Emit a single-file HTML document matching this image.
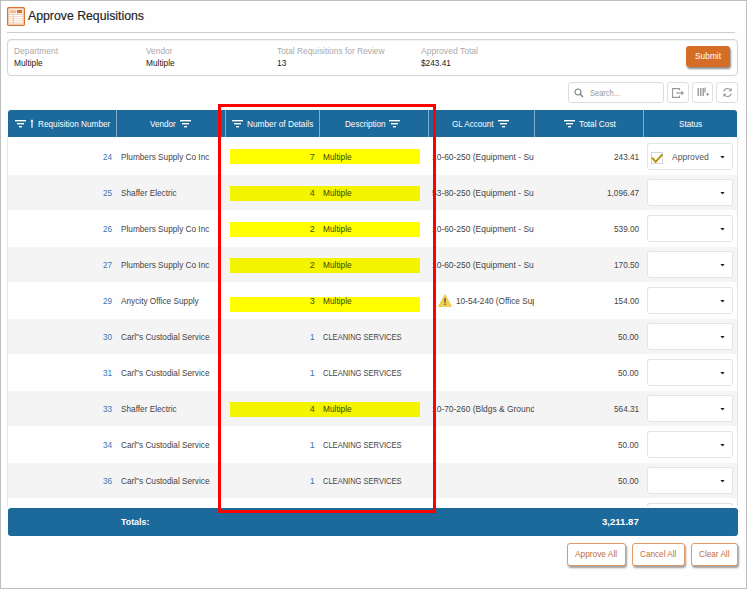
<!DOCTYPE html>
<html><head><meta charset="utf-8"><style>
html,body{margin:0;padding:0;}
body{width:747px;height:589px;position:relative;overflow:hidden;background:#fefefe;font-family:"Liberation Sans",sans-serif;}
.frame{position:absolute;left:0;top:0;width:747px;height:589px;box-sizing:border-box;border:1px solid #bdbdbd;}
.t{position:absolute;white-space:nowrap;transform-origin:0 0;}
</style></head><body>
<div class="frame"></div>
<svg style="position:absolute;left:7px;top:7px" width="18" height="19" viewBox="0 0 18 19">
<rect x="0.6" y="0.6" width="16.8" height="17.8" rx="1.5" fill="#fdf3ea" stroke="#d8732f" stroke-width="1.3"/>
<rect x="2" y="2" width="14" height="15" fill="#fff" stroke="#eab58e" stroke-width="0.6"/>
<rect x="2.8" y="3.2" width="6.5" height="2.8" fill="#f0b98f"/>
<rect x="10" y="3" width="5" height="3" fill="#d8732f"/>
<line x1="2.5" y1="7.3" x2="15.5" y2="7.3" stroke="#eab58e" stroke-width="0.8"/>
<line x1="2.5" y1="9.5" x2="15.5" y2="9.5" stroke="#f3d3bb" stroke-width="0.8"/>
<line x1="2.5" y1="11.6" x2="15.5" y2="11.6" stroke="#f3d3bb" stroke-width="0.8"/>
<line x1="2.5" y1="13.7" x2="15.5" y2="13.7" stroke="#f3d3bb" stroke-width="0.8"/>
<line x1="2.5" y1="15.8" x2="15.5" y2="15.8" stroke="#f3d3bb" stroke-width="0.8"/>
<line x1="6.2" y1="7.5" x2="6.2" y2="16.5" stroke="#eab58e" stroke-width="0.8"/>
</svg>
<div class="t" style="left:28.00px;top:7.90px;font-size:13px;line-height:15.60px;color:#262626;transform:scaleX(0.9442);-webkit-text-stroke:0.2px #262626;">Approve Requisitions</div>
<div style="position:absolute;left:7px;top:32px;width:728px;height:1px;background:#cdcdcd;"></div>
<div style="position:absolute;left:7px;top:39px;width:731px;height:37px;box-sizing:border-box;border:1px solid #d4d4d4;border-radius:4px;background:#fff;box-shadow:inset 0 1px 1px rgba(0,0,0,0.06);"></div>
<div class="t" style="left:13.60px;top:45.98px;font-size:9px;line-height:10.80px;color:#aaaaaa;transform:scaleX(0.9378);">Department</div>
<div class="t" style="left:13.60px;top:57.78px;font-size:9px;line-height:10.80px;color:#222;transform:scaleX(0.9257);">Multiple</div>
<div class="t" style="left:145.50px;top:45.98px;font-size:9px;line-height:10.80px;color:#aaaaaa;transform:scaleX(0.9300);">Vendor</div>
<div class="t" style="left:145.50px;top:57.78px;font-size:9px;line-height:10.80px;color:#222;transform:scaleX(0.9257);">Multiple</div>
<div class="t" style="left:277.40px;top:45.98px;font-size:9px;line-height:10.80px;color:#aaaaaa;transform:scaleX(0.9303);">Total Requisitions for Review</div>
<div class="t" style="left:277.40px;top:57.78px;font-size:9px;line-height:10.80px;color:#222;transform:scaleX(0.9300);">13</div>
<div class="t" style="left:420.80px;top:45.98px;font-size:9px;line-height:10.80px;color:#aaaaaa;transform:scaleX(0.9517);">Approved Total</div>
<div class="t" style="left:420.80px;top:57.78px;font-size:9px;line-height:10.80px;color:#222;transform:scaleX(0.9159);">$243.41</div>
<div style="position:absolute;left:686px;top:46px;width:44px;height:21px;background:#d66d27;border-radius:3px;box-shadow:1px 2px 2px rgba(0,0,0,0.45);"></div>
<div class="t" style="left:694.60px;top:51.28px;font-size:9px;line-height:10.80px;color:#fff;transform:scaleX(0.9289);">Submit</div>
<div style="position:absolute;left:568px;top:82px;width:96px;height:21px;box-sizing:border-box;border:1px solid #dcdcdc;border-radius:3px;background:#fff;"></div>
<svg style="position:absolute;left:574px;top:88px" width="10" height="10" viewBox="0 0 10 10">
<circle cx="4" cy="4" r="3" fill="none" stroke="#808080" stroke-width="1.2"/>
<line x1="6.2" y1="6.2" x2="9" y2="9" stroke="#808080" stroke-width="1.4"/></svg>
<div class="t" style="left:589.50px;top:87.68px;font-size:9px;line-height:10.80px;color:#999;transform:scaleX(0.8333);">Search...</div>
<div style="position:absolute;left:667px;top:82px;width:22px;height:21px;box-sizing:border-box;border:1px solid #e0e0e0;border-radius:3px;background:#fff;"></div>
<div style="position:absolute;left:692px;top:82px;width:21px;height:21px;box-sizing:border-box;border:1px solid #e0e0e0;border-radius:3px;background:#fff;"></div>
<div style="position:absolute;left:716px;top:82px;width:22px;height:21px;box-sizing:border-box;border:1px solid #e0e0e0;border-radius:3px;background:#fff;"></div>
<svg style="position:absolute;left:672px;top:88px" width="13" height="10" viewBox="0 0 13 10">
<path d="M7.5 2.5 V0.6 H0.6 V9.4 H7.5 V7.5" fill="none" stroke="#9a9a9a" stroke-width="1.1"/>
<line x1="4" y1="5" x2="10" y2="5" stroke="#9a9a9a" stroke-width="1.2"/>
<path d="M9.3 2.6 L12 5 L9.3 7.4 Z" fill="#9a9a9a"/></svg>
<svg style="position:absolute;left:697px;top:87px" width="12" height="12" viewBox="0 0 12 12">
<rect x="0.5" y="1" width="1.4" height="8" fill="#9a9a9a"/><rect x="3" y="1" width="1.4" height="8" fill="#9a9a9a"/><rect x="5.5" y="1" width="1.4" height="8" fill="#9a9a9a"/>
<rect x="7.4" y="0.5" width="1.2" height="5" fill="#9a9a9a"/>
<path d="M9 7.3 H12 M10.5 5.8 V8.8" stroke="#9a9a9a" stroke-width="1"/></svg>
<svg style="position:absolute;left:722px;top:87px" width="11" height="11" viewBox="0 0 11 11">
<path d="M1.6 4.6 A4 4 0 0 1 8.6 3" fill="none" stroke="#9a9a9a" stroke-width="1.1"/>
<path d="M9.6 0.8 V4.2 H6.3 Z" fill="#9a9a9a"/>
<path d="M9.4 6.4 A4 4 0 0 1 2.4 8" fill="none" stroke="#9a9a9a" stroke-width="1.1"/>
<path d="M1.4 10.2 V6.8 H4.7 Z" fill="#9a9a9a"/></svg>
<div style="position:absolute;left:8px;top:110px;width:729px;height:27px;background:#1c6a9c;border-radius:3px 3px 0 0;"></div>
<div style="position:absolute;left:116px;top:110px;width:1px;height:27px;background:rgba(255,255,255,0.45);"></div>
<div style="position:absolute;left:225px;top:110px;width:1px;height:27px;background:rgba(255,255,255,0.45);"></div>
<div style="position:absolute;left:319px;top:110px;width:1px;height:27px;background:rgba(255,255,255,0.45);"></div>
<div style="position:absolute;left:428px;top:110px;width:1px;height:27px;background:rgba(255,255,255,0.45);"></div>
<div style="position:absolute;left:534px;top:110px;width:1px;height:27px;background:rgba(255,255,255,0.45);"></div>
<div style="position:absolute;left:643px;top:110px;width:1px;height:27px;background:rgba(255,255,255,0.45);"></div>
<div style="position:absolute;left:7px;top:137px;width:1px;height:369px;background:#e6e6e6;"></div>
<div style="position:absolute;left:737px;top:137px;width:1px;height:369px;background:#e6e6e6;"></div>
<svg style="position:absolute;left:15px;top:120px" width="12" height="8" viewBox="0 0 12 8">
<rect x="0" y="0" width="11" height="1.4" fill="#fff"/><rect x="2" y="3" width="7" height="1.4" fill="#fff"/><rect x="4" y="6" width="3" height="1.4" fill="#fff"/></svg>
<svg style="position:absolute;left:30px;top:119px" width="4" height="9" viewBox="0 0 4 9"><path d="M2 0.3 L3.6 2.6 H0.4 Z" fill="#fff"/><rect x="1.4" y="2" width="1.2" height="6.8" fill="#fff"/></svg>
<div class="t" style="left:38.30px;top:118.68px;font-size:9px;line-height:10.80px;color:#fff;transform:scaleX(0.9150);">Requisition Number</div>
<div class="t" style="left:149.60px;top:118.68px;font-size:9px;line-height:10.80px;color:#fff;transform:scaleX(0.9008);">Vendor</div>
<svg style="position:absolute;left:180px;top:120px" width="12" height="8" viewBox="0 0 12 8">
<rect x="0" y="0" width="11" height="1.4" fill="#fff"/><rect x="2" y="3" width="7" height="1.4" fill="#fff"/><rect x="4" y="6" width="3" height="1.4" fill="#fff"/></svg>
<svg style="position:absolute;left:232px;top:120px" width="12" height="8" viewBox="0 0 12 8">
<rect x="0" y="0" width="11" height="1.4" fill="#fff"/><rect x="2" y="3" width="7" height="1.4" fill="#fff"/><rect x="4" y="6" width="3" height="1.4" fill="#fff"/></svg>
<div class="t" style="left:247.40px;top:118.68px;font-size:9px;line-height:10.80px;color:#fff;transform:scaleX(0.9203);">Number of Details</div>
<div class="t" style="left:344.60px;top:118.68px;font-size:9px;line-height:10.80px;color:#fff;transform:scaleX(0.9022);">Description</div>
<svg style="position:absolute;left:389px;top:120px" width="12" height="8" viewBox="0 0 12 8">
<rect x="0" y="0" width="11" height="1.4" fill="#fff"/><rect x="2" y="3" width="7" height="1.4" fill="#fff"/><rect x="4" y="6" width="3" height="1.4" fill="#fff"/></svg>
<div class="t" style="left:452.00px;top:118.68px;font-size:9px;line-height:10.80px;color:#fff;transform:scaleX(0.8980);">GL Account</div>
<svg style="position:absolute;left:498px;top:120px" width="12" height="8" viewBox="0 0 12 8">
<rect x="0" y="0" width="11" height="1.4" fill="#fff"/><rect x="2" y="3" width="7" height="1.4" fill="#fff"/><rect x="4" y="6" width="3" height="1.4" fill="#fff"/></svg>
<svg style="position:absolute;left:564px;top:120px" width="12" height="8" viewBox="0 0 12 8">
<rect x="0" y="0" width="11" height="1.4" fill="#fff"/><rect x="2" y="3" width="7" height="1.4" fill="#fff"/><rect x="4" y="6" width="3" height="1.4" fill="#fff"/></svg>
<div class="t" style="left:579.00px;top:118.68px;font-size:9px;line-height:10.80px;color:#fff;transform:scaleX(0.9224);">Total Cost</div>
<div class="t" style="left:678.80px;top:118.68px;font-size:9px;line-height:10.80px;color:#fff;transform:scaleX(0.9093);">Status</div>
<div style="position:absolute;left:8px;top:137px;width:729px;height:369px;overflow:hidden;">
<div style="position:absolute;left:0;top:38px;width:729px;height:35px;background:#f4f4f4;"></div>
<div style="position:absolute;left:0;top:110px;width:729px;height:35px;background:#f4f4f4;"></div>
<div style="position:absolute;left:0;top:182px;width:729px;height:35px;background:#f4f4f4;"></div>
<div style="position:absolute;left:0;top:254px;width:729px;height:35px;background:#f4f4f4;"></div>
<div style="position:absolute;left:0;top:326px;width:729px;height:35px;background:#f4f4f4;"></div>
</div>
<div class="t" style="left:102.86px;top:151.68px;font-size:9px;line-height:10.80px;color:#3a78b8;transform:scaleX(0.9150);">24</div>
<div class="t" style="left:120.50px;top:151.68px;font-size:9px;line-height:10.80px;color:#444;transform:scaleX(0.9150);">Plumbers Supply Co Inc</div>
<div style="position:absolute;left:230px;top:149px;width:190px;height:15px;background:#ffff00;"></div>
<div class="t" style="left:309.83px;top:151.68px;font-size:9px;line-height:10.80px;color:#3a5a00;">7</div>
<div class="t" style="left:322.80px;top:151.68px;font-size:9px;line-height:10.80px;color:#444400;transform:scaleX(0.9224);">Multiple</div>
<div style="position:absolute;left:428px;top:147px;width:106px;height:20px;overflow:hidden;">
<div class="t" style="left:4.00px;top:4.68px;font-size:9px;line-height:10.80px;color:#444;transform:scaleX(0.9368);">10-60-250 (Equipment - Supplies)</div>
</div>
<div class="t" style="left:613.60px;top:151.68px;font-size:9px;line-height:10.80px;color:#444;transform:scaleX(0.9150);">243.41</div>
<div style="position:absolute;left:647px;top:143px;width:86px;height:27px;box-sizing:border-box;border:1px solid #e4e4e4;border-radius:3px;background:#fff;"></div>
<svg style="position:absolute;left:720px;top:156px" width="5" height="3" viewBox="0 0 5 3"><path d="M0.3 0 H4.7 L2.5 2.6 Z" fill="#222"/></svg>
<svg style="position:absolute;left:651px;top:152px" width="12" height="12" viewBox="0 0 12 12">
<rect x="0.5" y="0.5" width="11" height="11" fill="#fff" stroke="#d6d6d6" stroke-width="1"/>
<path d="M1 5.6 L4.7 9.8 L11.3 2.3" fill="none" stroke="#b39206" stroke-width="2"/></svg>
<div class="t" style="left:672.00px;top:151.68px;font-size:9px;line-height:10.80px;color:#555;transform:scaleX(0.9528);">Approved</div>
<div class="t" style="left:102.86px;top:187.68px;font-size:9px;line-height:10.80px;color:#3a78b8;transform:scaleX(0.9150);">25</div>
<div class="t" style="left:120.50px;top:187.68px;font-size:9px;line-height:10.80px;color:#444;transform:scaleX(0.9150);">Shaffer Electric</div>
<div style="position:absolute;left:230px;top:186px;width:190px;height:15px;background:#f4f400;"></div>
<div class="t" style="left:309.83px;top:187.68px;font-size:9px;line-height:10.80px;color:#3a5a00;">4</div>
<div class="t" style="left:322.80px;top:187.68px;font-size:9px;line-height:10.80px;color:#444400;transform:scaleX(0.9224);">Multiple</div>
<div style="position:absolute;left:428px;top:183px;width:106px;height:20px;overflow:hidden;">
<div class="t" style="left:4.00px;top:4.68px;font-size:9px;line-height:10.80px;color:#444;transform:scaleX(0.9368);">53-80-250 (Equipment - Supplies)</div>
</div>
<div class="t" style="left:606.72px;top:187.68px;font-size:9px;line-height:10.80px;color:#444;transform:scaleX(0.9150);">1,096.47</div>
<div style="position:absolute;left:647px;top:179px;width:86px;height:27px;box-sizing:border-box;border:1px solid #e4e4e4;border-radius:3px;background:#fff;"></div>
<svg style="position:absolute;left:720px;top:192px" width="5" height="3" viewBox="0 0 5 3"><path d="M0.3 0 H4.7 L2.5 2.6 Z" fill="#222"/></svg>
<div class="t" style="left:102.86px;top:223.68px;font-size:9px;line-height:10.80px;color:#3a78b8;transform:scaleX(0.9150);">26</div>
<div class="t" style="left:120.50px;top:223.68px;font-size:9px;line-height:10.80px;color:#444;transform:scaleX(0.9150);">Plumbers Supply Co Inc</div>
<div style="position:absolute;left:230px;top:222px;width:190px;height:15px;background:#ffff00;"></div>
<div class="t" style="left:309.83px;top:223.68px;font-size:9px;line-height:10.80px;color:#3a5a00;">2</div>
<div class="t" style="left:322.80px;top:223.68px;font-size:9px;line-height:10.80px;color:#444400;transform:scaleX(0.9224);">Multiple</div>
<div style="position:absolute;left:428px;top:219px;width:106px;height:20px;overflow:hidden;">
<div class="t" style="left:4.00px;top:4.68px;font-size:9px;line-height:10.80px;color:#444;transform:scaleX(0.9368);">10-60-250 (Equipment - Supplies)</div>
</div>
<div class="t" style="left:613.60px;top:223.68px;font-size:9px;line-height:10.80px;color:#444;transform:scaleX(0.9150);">539.00</div>
<div style="position:absolute;left:647px;top:215px;width:86px;height:27px;box-sizing:border-box;border:1px solid #e4e4e4;border-radius:3px;background:#fff;"></div>
<svg style="position:absolute;left:720px;top:228px" width="5" height="3" viewBox="0 0 5 3"><path d="M0.3 0 H4.7 L2.5 2.6 Z" fill="#222"/></svg>
<div class="t" style="left:102.86px;top:259.68px;font-size:9px;line-height:10.80px;color:#3a78b8;transform:scaleX(0.9150);">27</div>
<div class="t" style="left:120.50px;top:259.68px;font-size:9px;line-height:10.80px;color:#444;transform:scaleX(0.9150);">Plumbers Supply Co Inc</div>
<div style="position:absolute;left:230px;top:258px;width:190px;height:15px;background:#f4f400;"></div>
<div class="t" style="left:309.83px;top:259.68px;font-size:9px;line-height:10.80px;color:#3a5a00;">2</div>
<div class="t" style="left:322.80px;top:259.68px;font-size:9px;line-height:10.80px;color:#444400;transform:scaleX(0.9224);">Multiple</div>
<div style="position:absolute;left:428px;top:255px;width:106px;height:20px;overflow:hidden;">
<div class="t" style="left:4.00px;top:4.68px;font-size:9px;line-height:10.80px;color:#444;transform:scaleX(0.9368);">10-60-250 (Equipment - Supplies)</div>
</div>
<div class="t" style="left:613.60px;top:259.68px;font-size:9px;line-height:10.80px;color:#444;transform:scaleX(0.9150);">170.50</div>
<div style="position:absolute;left:647px;top:251px;width:86px;height:27px;box-sizing:border-box;border:1px solid #e4e4e4;border-radius:3px;background:#fff;"></div>
<svg style="position:absolute;left:720px;top:264px" width="5" height="3" viewBox="0 0 5 3"><path d="M0.3 0 H4.7 L2.5 2.6 Z" fill="#222"/></svg>
<div class="t" style="left:102.86px;top:295.68px;font-size:9px;line-height:10.80px;color:#3a78b8;transform:scaleX(0.9150);">29</div>
<div class="t" style="left:120.50px;top:295.68px;font-size:9px;line-height:10.80px;color:#444;transform:scaleX(0.9150);">Anycity Office Supply</div>
<div style="position:absolute;left:230px;top:297px;width:190px;height:15px;background:#ffff00;"></div>
<div class="t" style="left:309.83px;top:295.68px;font-size:9px;line-height:10.80px;color:#3a5a00;">3</div>
<div class="t" style="left:322.80px;top:295.68px;font-size:9px;line-height:10.80px;color:#444400;transform:scaleX(0.9224);">Multiple</div>
<svg style="position:absolute;left:438px;top:294px" width="14" height="13" viewBox="0 0 14 13">
<path d="M7 0.5 L13.6 12.5 H0.4 Z" fill="#f3cf4c" stroke="#e8bd3a" stroke-width="0.6" stroke-linejoin="round"/>
<rect x="6.3" y="4" width="1.4" height="4.6" fill="#555"/><rect x="6.3" y="9.6" width="1.4" height="1.4" fill="#555"/></svg>
<div style="position:absolute;left:436px;top:291px;width:98px;height:20px;overflow:hidden;">
<div class="t" style="left:19.50px;top:4.68px;font-size:9px;line-height:10.80px;color:#444;transform:scaleX(0.9150);">10-54-240 (Office Supplies)</div>
</div>
<div class="t" style="left:613.60px;top:295.68px;font-size:9px;line-height:10.80px;color:#444;transform:scaleX(0.9150);">154.00</div>
<div style="position:absolute;left:647px;top:287px;width:86px;height:27px;box-sizing:border-box;border:1px solid #e4e4e4;border-radius:3px;background:#fff;"></div>
<svg style="position:absolute;left:720px;top:300px" width="5" height="3" viewBox="0 0 5 3"><path d="M0.3 0 H4.7 L2.5 2.6 Z" fill="#222"/></svg>
<div class="t" style="left:102.86px;top:331.68px;font-size:9px;line-height:10.80px;color:#3a78b8;transform:scaleX(0.9150);">30</div>
<div class="t" style="left:120.50px;top:331.68px;font-size:9px;line-height:10.80px;color:#444;transform:scaleX(0.9150);">Carl"s Custodial Service</div>
<div class="t" style="left:309.83px;top:331.68px;font-size:9px;line-height:10.80px;color:#3a78b8;">1</div>
<div class="t" style="left:322.50px;top:331.68px;font-size:9px;line-height:10.80px;color:#444;transform:scaleX(0.8363);">CLEANING SERVICES</div>
<div class="t" style="left:618.17px;top:331.68px;font-size:9px;line-height:10.80px;color:#444;transform:scaleX(0.9150);">50.00</div>
<div style="position:absolute;left:647px;top:323px;width:86px;height:27px;box-sizing:border-box;border:1px solid #e4e4e4;border-radius:3px;background:#fff;"></div>
<svg style="position:absolute;left:720px;top:336px" width="5" height="3" viewBox="0 0 5 3"><path d="M0.3 0 H4.7 L2.5 2.6 Z" fill="#222"/></svg>
<div class="t" style="left:102.86px;top:367.68px;font-size:9px;line-height:10.80px;color:#3a78b8;transform:scaleX(0.9150);">31</div>
<div class="t" style="left:120.50px;top:367.68px;font-size:9px;line-height:10.80px;color:#444;transform:scaleX(0.9150);">Carl"s Custodial Service</div>
<div class="t" style="left:309.83px;top:367.68px;font-size:9px;line-height:10.80px;color:#3a78b8;">1</div>
<div class="t" style="left:322.50px;top:367.68px;font-size:9px;line-height:10.80px;color:#444;transform:scaleX(0.8363);">CLEANING SERVICES</div>
<div class="t" style="left:618.17px;top:367.68px;font-size:9px;line-height:10.80px;color:#444;transform:scaleX(0.9150);">50.00</div>
<div style="position:absolute;left:647px;top:359px;width:86px;height:27px;box-sizing:border-box;border:1px solid #e4e4e4;border-radius:3px;background:#fff;"></div>
<svg style="position:absolute;left:720px;top:372px" width="5" height="3" viewBox="0 0 5 3"><path d="M0.3 0 H4.7 L2.5 2.6 Z" fill="#222"/></svg>
<div class="t" style="left:102.86px;top:403.68px;font-size:9px;line-height:10.80px;color:#3a78b8;transform:scaleX(0.9150);">33</div>
<div class="t" style="left:120.50px;top:403.68px;font-size:9px;line-height:10.80px;color:#444;transform:scaleX(0.9150);">Shaffer Electric</div>
<div style="position:absolute;left:230px;top:402px;width:190px;height:15px;background:#f4f400;"></div>
<div class="t" style="left:309.83px;top:403.68px;font-size:9px;line-height:10.80px;color:#3a5a00;">4</div>
<div class="t" style="left:322.80px;top:403.68px;font-size:9px;line-height:10.80px;color:#444400;transform:scaleX(0.9224);">Multiple</div>
<div style="position:absolute;left:428px;top:399px;width:106px;height:20px;overflow:hidden;">
<div class="t" style="left:4.00px;top:4.68px;font-size:9px;line-height:10.80px;color:#444;transform:scaleX(0.9368);">10-70-260 (Bldgs &amp; Grounds)</div>
</div>
<div class="t" style="left:613.60px;top:403.68px;font-size:9px;line-height:10.80px;color:#444;transform:scaleX(0.9150);">564.31</div>
<div style="position:absolute;left:647px;top:395px;width:86px;height:27px;box-sizing:border-box;border:1px solid #e4e4e4;border-radius:3px;background:#fff;"></div>
<svg style="position:absolute;left:720px;top:408px" width="5" height="3" viewBox="0 0 5 3"><path d="M0.3 0 H4.7 L2.5 2.6 Z" fill="#222"/></svg>
<div class="t" style="left:102.86px;top:439.68px;font-size:9px;line-height:10.80px;color:#3a78b8;transform:scaleX(0.9150);">34</div>
<div class="t" style="left:120.50px;top:439.68px;font-size:9px;line-height:10.80px;color:#444;transform:scaleX(0.9150);">Carl"s Custodial Service</div>
<div class="t" style="left:309.83px;top:439.68px;font-size:9px;line-height:10.80px;color:#3a78b8;">1</div>
<div class="t" style="left:322.50px;top:439.68px;font-size:9px;line-height:10.80px;color:#444;transform:scaleX(0.8363);">CLEANING SERVICES</div>
<div class="t" style="left:618.17px;top:439.68px;font-size:9px;line-height:10.80px;color:#444;transform:scaleX(0.9150);">50.00</div>
<div style="position:absolute;left:647px;top:431px;width:86px;height:27px;box-sizing:border-box;border:1px solid #e4e4e4;border-radius:3px;background:#fff;"></div>
<svg style="position:absolute;left:720px;top:444px" width="5" height="3" viewBox="0 0 5 3"><path d="M0.3 0 H4.7 L2.5 2.6 Z" fill="#222"/></svg>
<div class="t" style="left:102.86px;top:475.68px;font-size:9px;line-height:10.80px;color:#3a78b8;transform:scaleX(0.9150);">36</div>
<div class="t" style="left:120.50px;top:475.68px;font-size:9px;line-height:10.80px;color:#444;transform:scaleX(0.9150);">Carl"s Custodial Service</div>
<div class="t" style="left:309.83px;top:475.68px;font-size:9px;line-height:10.80px;color:#3a78b8;">1</div>
<div class="t" style="left:322.50px;top:475.68px;font-size:9px;line-height:10.80px;color:#444;transform:scaleX(0.8363);">CLEANING SERVICES</div>
<div class="t" style="left:618.17px;top:475.68px;font-size:9px;line-height:10.80px;color:#444;transform:scaleX(0.9150);">50.00</div>
<div style="position:absolute;left:647px;top:467px;width:86px;height:27px;box-sizing:border-box;border:1px solid #e4e4e4;border-radius:3px;background:#fff;"></div>
<svg style="position:absolute;left:720px;top:480px" width="5" height="3" viewBox="0 0 5 3"><path d="M0.3 0 H4.7 L2.5 2.6 Z" fill="#222"/></svg>
<div style="position:absolute;left:647px;top:503px;width:86px;height:3px;box-sizing:border-box;border:1px solid #e0e0e0;border-bottom:none;border-radius:3px 3px 0 0;background:#fff;"></div>
<div style="position:absolute;left:8px;top:508px;width:730px;height:28px;background:#1c6a9c;border-radius:3px;"></div>
<div class="t" style="left:120.60px;top:517.18px;font-size:9px;line-height:10.80px;color:#fff;transform:scaleX(0.9846);font-weight:bold;">Totals:</div>
<div class="t" style="left:602.20px;top:517.18px;font-size:9px;line-height:10.80px;color:#fff;transform:scaleX(1.0648);font-weight:bold;">3,211.87</div>
<div style="position:absolute;left:567px;top:543px;width:59px;height:23px;box-sizing:border-box;border:1px solid #df9a66;border-radius:3px;background:#fff;box-shadow:1px 2px 2px rgba(0,0,0,0.38);"></div>
<div class="t" style="left:575.45px;top:548.78px;font-size:9px;line-height:10.80px;color:#c06f38;transform:scaleX(0.9245);">Approve All</div>
<div style="position:absolute;left:632px;top:543px;width:53px;height:23px;box-sizing:border-box;border:1px solid #df9a66;border-radius:3px;background:#fff;box-shadow:1px 2px 2px rgba(0,0,0,0.38);"></div>
<div class="t" style="left:640.30px;top:548.78px;font-size:9px;line-height:10.80px;color:#c06f38;transform:scaleX(0.9099);">Cancel All</div>
<div style="position:absolute;left:691px;top:543px;width:47px;height:23px;box-sizing:border-box;border:1px solid #df9a66;border-radius:3px;background:#fff;box-shadow:1px 2px 2px rgba(0,0,0,0.38);"></div>
<div class="t" style="left:699.25px;top:548.78px;font-size:9px;line-height:10.80px;color:#c06f38;transform:scaleX(0.9098);">Clear All</div>
<div style="position:absolute;left:218px;top:104px;width:218px;height:409px;box-sizing:border-box;border:3px solid #ff0000;"></div>
</body></html>
